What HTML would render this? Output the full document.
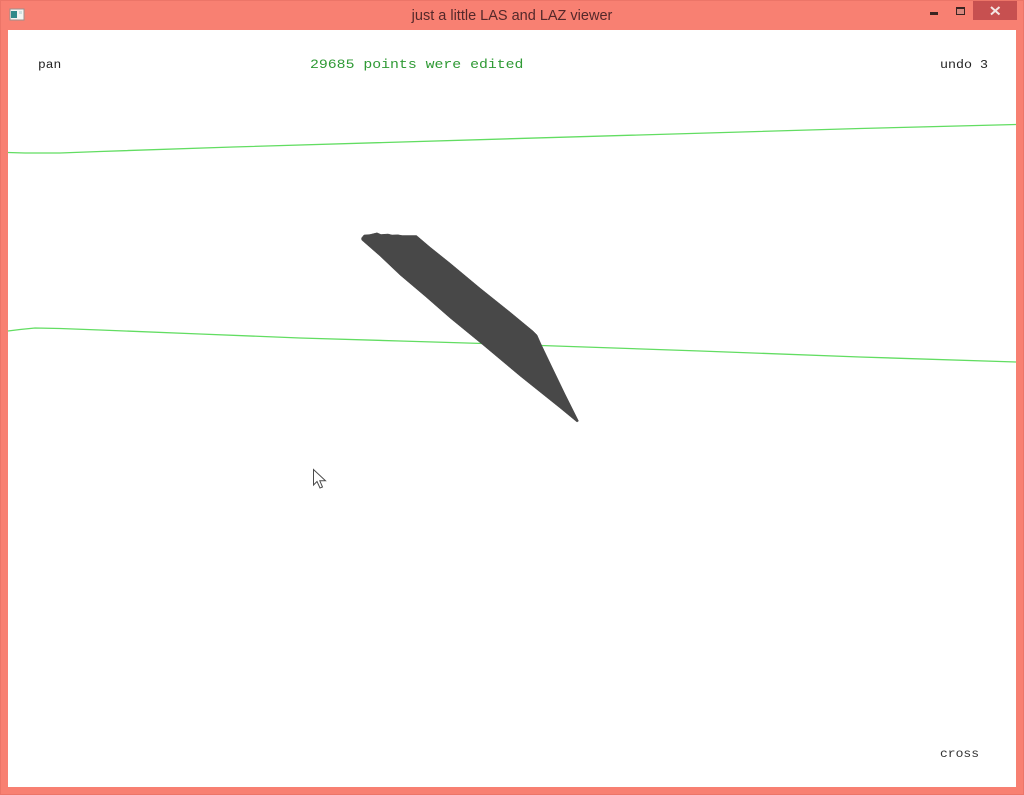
<!DOCTYPE html>
<html lang="en">
<head>
<meta charset="utf-8">
<title>just a little LAS and LAZ viewer</title>
<style>
html,body{margin:0;padding:0}
body{width:1024px;height:795px;overflow:hidden;position:relative;background:#f88072;font-family:"Liberation Sans",sans-serif}
#client{position:absolute;left:8px;top:30px;width:1008px;height:757px;background:#fff}
#title{position:absolute;left:0;top:8px;width:1024px;text-align:center;font-size:14.5px;line-height:17px;color:#54282a}
#close{position:absolute;left:973px;top:0;width:44px;height:20px;background:#c75050}
.t{position:absolute;font-family:"Liberation Mono",monospace;white-space:pre;line-height:16px;transform-origin:0 0}
svg{position:absolute;left:0;top:0}
</style>
</head>
<body>
<div id="client"></div>
<div id="close"></div>
<div id="title">just a little LAS and LAZ viewer</div>
<svg width="1024" height="795" viewBox="0 0 1024 795">
  <!-- outer edge -->
  <rect x="0.500" y="0.500" width="1023" height="794" fill="none" stroke="#ec7568" stroke-width="1"/>
  <!-- app icon -->
  <rect x="10" y="9" width="14" height="11" fill="#f4f4f2" stroke="#9b8f8c" stroke-width="1"/>
  <rect x="11" y="11" width="6" height="7" fill="#2f8a8a"/>
  <rect x="19" y="11" width="3" height="3" fill="#cfe0e0"/>
  <!-- window controls -->
  <rect x="930" y="12" width="8" height="3" fill="#3a2422"/>
  <rect x="956.500" y="7.500" width="8" height="7" fill="#d9887e" stroke="#3a2422" stroke-width="1"/>
  <rect x="956" y="7" width="9" height="2" fill="#3a2422"/>
  <path d="M991 7L999.500 14.500M999.500 7L991 14.500" stroke="#f4e6e4" stroke-width="2"/>
  <!-- green lines -->
  <polyline fill="none" stroke="#62dd62" stroke-width="1.300" points="8,152.500 25,153 60,153 100,151.500 233,147 512,138.700 860,128.500 1016,124.500"/>
  <polyline fill="none" stroke="#62dd62" stroke-width="1.300" points="8,331 20,329.500 35,328 60,328.500 100,330 200,334 300,338 400,341 483,343.500 541,345.500 700,351 860,357 1016,362"/>
  <!-- point cloud -->
  <polygon fill="#484848" stroke="#484848" stroke-width="0.500" points="361.500,238 364,235 370,234.500 377,232.800 381,234.500 388,234 392,235 398,234.800 402,235.500 416.500,235.500 430,247 450,263 480,288 510,312 533,331 537,335 541,344 552,367 565,394 578.500,421 577,422 560,408 520,376 483,345 450,318 426,297 400,275 380,256 361.700,240"/>
  <!-- cursor -->
  <path d="M313.500 469.500V485L317 481.500L320 488L322.500 487L319.800 480.800H325.500Z" fill="#fff" stroke="#4a4a4a" stroke-width="1"/>
</svg>
<div class="t" style="left:38px;top:58px;font-size:11.500px;transform:scaleX(1.12);color:#222">pan</div>
<div class="t" style="left:310px;top:57px;font-size:13px;transform:scaleX(1.14);color:#2f9a35">29685 points were edited</div>
<div class="t" style="left:940px;top:57px;font-size:12px;transform:scaleX(1.11);color:#222">undo 3</div>
<div class="t" style="left:940px;top:747px;font-size:11.500px;transform:scaleX(1.13);color:#333">cross</div>
</body>
</html>
